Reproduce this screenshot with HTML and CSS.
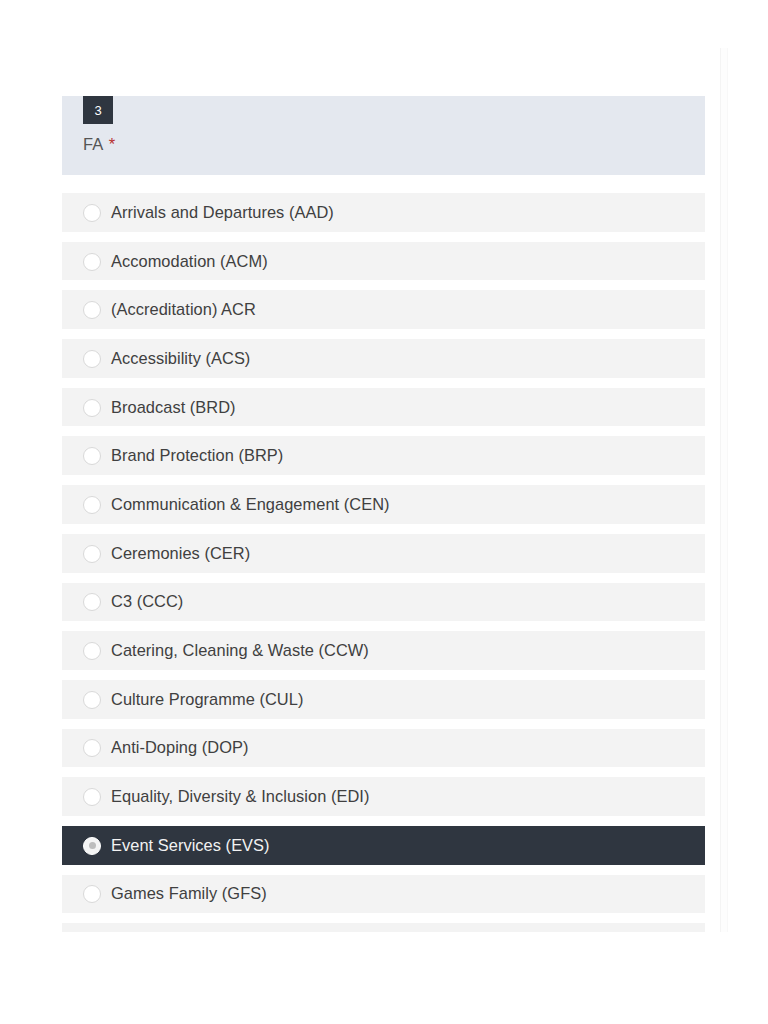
FILE: index.html
```html
<!DOCTYPE html>
<html>
<head>
<meta charset="utf-8">
<link rel="stylesheet" href="styles.css">
</head>
<body>
<div class="frame">
  <div class="content">
    <div class="question">
      <div class="badge">3</div>
      <div class="qtitle">FA <span class="req">*</span></div>
    </div>
    <div class="options">
      <div class="opt"><span class="radio"></span><span class="label">Arrivals and Departures (AAD)</span></div>
      <div class="opt"><span class="radio"></span><span class="label">Accomodation (ACM)</span></div>
      <div class="opt"><span class="radio"></span><span class="label">(Accreditation) ACR</span></div>
      <div class="opt"><span class="radio"></span><span class="label">Accessibility (ACS)</span></div>
      <div class="opt"><span class="radio"></span><span class="label">Broadcast (BRD)</span></div>
      <div class="opt"><span class="radio"></span><span class="label">Brand Protection (BRP)</span></div>
      <div class="opt"><span class="radio"></span><span class="label">Communication &amp; Engagement (CEN)</span></div>
      <div class="opt"><span class="radio"></span><span class="label">Ceremonies (CER)</span></div>
      <div class="opt"><span class="radio"></span><span class="label">C3 (CCC)</span></div>
      <div class="opt"><span class="radio"></span><span class="label">Catering, Cleaning &amp; Waste (CCW)</span></div>
      <div class="opt"><span class="radio"></span><span class="label">Culture Programme (CUL)</span></div>
      <div class="opt"><span class="radio"></span><span class="label">Anti-Doping (DOP)</span></div>
      <div class="opt"><span class="radio"></span><span class="label">Equality, Diversity &amp; Inclusion (EDI)</span></div>
      <div class="opt selected"><span class="radio"></span><span class="label">Event Services (EVS)</span></div>
      <div class="opt"><span class="radio"></span><span class="label">Games Family (GFS)</span></div>
      <div class="opt peek"></div>
    </div>
  </div>
  <div class="track"></div>
</div>
</body>
</html>
```
FILE: styles.css
```css
html, body {
  margin: 0;
  padding: 0;
  background: #ffffff;
}
body {
  font-family: "Liberation Sans", Arial, sans-serif;
}
.frame {
  display: flex;
  margin: 48px 0 0 46px;
  width: 682px;
  height: 884px;
  overflow: hidden;
}
.content {
  width: 674px;
  box-sizing: border-box;
  padding: 48px 15px 0 16px;
}
.track {
  width: 6px;
  border-left: 1px solid #f4f4f4;
  border-right: 1px solid #f8f8f8;
  background: #fdfdfd;
}
.question {
  background: #e4e8ef;
  height: 79px;
  box-sizing: border-box;
  padding-left: 21px;
}
.badge {
  width: 30px;
  height: 28px;
  background: #2f3640;
  color: #ffffff;
  font-size: 13px;
  display: flex;
  align-items: center;
  justify-content: center;
}
.qtitle {
  margin-top: 11px;
  font-size: 16.5px;
  color: #555555;
  word-spacing: 2px;
}
.req {
  color: #b8312f;
}
.options {
  margin-top: 18px;
  display: flex;
  flex-direction: column;
  gap: 10px;
}
.opt {
  height: 38.7px;
  background: #f3f3f3;
  display: flex;
  align-items: center;
  padding-left: 21px;
  color: #404040;
  font-size: 16.4px;
  letter-spacing: 0.05px;
  flex-shrink: 0;
}
.radio {
  width: 16px;
  height: 16px;
  border: 1px solid #d9d9d9;
  border-radius: 50%;
  background: #ffffff;
  box-sizing: content-box;
  margin-right: 10px;
  margin-top: 1px;
  display: flex;
  align-items: center;
  justify-content: center;
}
.opt.selected {
  background: #2f3640;
  color: #f2f2f2;
}
.opt.selected .radio {
  border-color: #ffffff;
  background: #f4f4f4;
}
.opt.selected .radio::after {
  content: "";
  width: 7px;
  height: 7px;
  border-radius: 50%;
  background: #bdbdbd;
}
```
